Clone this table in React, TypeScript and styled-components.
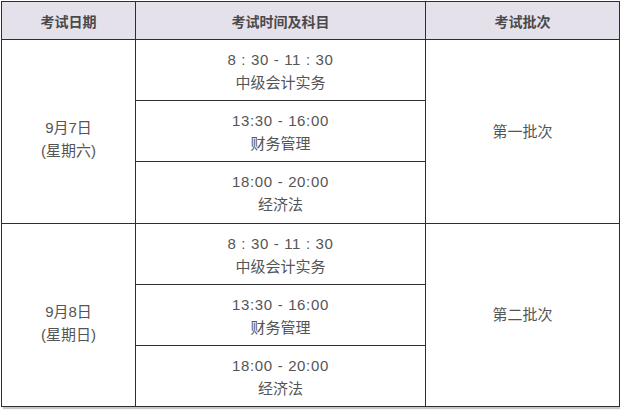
import styled, { createGlobalStyle } from "styled-components";

const GlobalStyle = createGlobalStyle`
  html, body {
    margin: 0;
    padding: 0;
    background: #fff;
  }
  body {
    font-family: "Liberation Sans", "Noto Sans CJK SC", sans-serif;
  }
`;

const Page = styled.div`
  width: 620px;
  height: 410px;
  padding: 1px 0 0 1px;
  box-sizing: border-box;
  background: #fff;
`;

const Table = styled.table`
  width: 615px;
  border-collapse: collapse;
  table-layout: fixed;
  color: #555;
  box-shadow: 2px 2px 1px rgba(0, 0, 0, 0.22);
`;

const HeadCell = styled.th<{ $w: number }>`
  width: ${(p) => p.$w}px;
  height: 37px;
  padding: 0;
  background: #e5e1ea;
  border: 1px solid #2e2e2e;
  color: #4a4a4a;
  font-size: 14px;
  font-weight: bold;
  text-align: center;
  vertical-align: middle;
`;

const Cell = styled.td<{ $offset?: number }>`
  padding: ${(p) => p.$offset ?? 0}px 0 0 0;
  border: 1px solid #2e2e2e;
  text-align: center;
  vertical-align: middle;
  font-size: 15px;
  line-height: 23px;
`;

const SlotCell = styled(Cell)`
  height: 58.2px;
`;

const Line = styled.div<{ $spaced?: boolean }>`
  white-space: nowrap;
  letter-spacing: ${(p) => (p.$spaced ? "0.65px" : "0")};
`;

type Slot = { time: string; subject: string };

const slots: Slot[] = [
  { time: "8 : 30 - 11 : 30", subject: "中级会计实务" },
  { time: "13:30 - 16:00", subject: "财务管理" },
  { time: "18:00 - 20:00", subject: "经济法" },
];

const days = [
  { date: "9月7日", week: "(星期六)", batch: "第一批次" },
  { date: "9月8日", week: "(星期日)", batch: "第二批次" },
];

const App = () => {
  return (
    <Page>
      <GlobalStyle />
      <Table>
        <thead>
          <tr>
            <HeadCell $w={133}>考试日期</HeadCell>
            <HeadCell $w={289}>考试时间及科目</HeadCell>
            <HeadCell $w={193}>考试批次</HeadCell>
          </tr>
        </thead>
        <tbody>
          {days.map((day) =>
            slots.map((slot, i) => (
              <tr key={day.date + i}>
                {i === 0 && (
                  <Cell rowSpan={3} $offset={16}>
                    <Line>{day.date}</Line>
                    <Line>{day.week}</Line>
                  </Cell>
                )}
                <SlotCell $offset={2}>
                  <Line $spaced>{slot.time}</Line>
                  <Line>{slot.subject}</Line>
                </SlotCell>
                {i === 0 && <Cell rowSpan={3}>{day.batch}</Cell>}
              </tr>
            ))
          )}
        </tbody>
      </Table>
    </Page>
  );
};

export default App;
